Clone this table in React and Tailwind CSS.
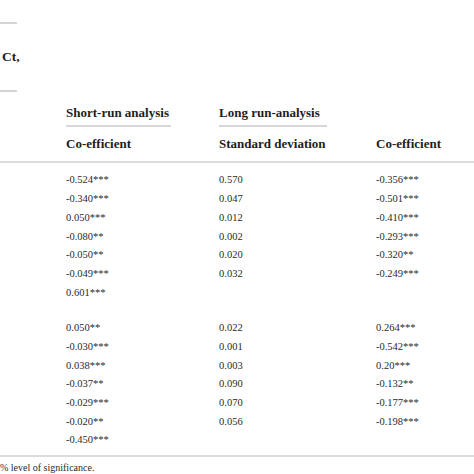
import React from "react";

const shortRun = [
  ["-0.524***", "0.570", "-0.356***"],
  ["-0.340***", "0.047", "-0.501***"],
  ["0.050***", "0.012", "-0.410***"],
  ["-0.080**", "0.002", "-0.293***"],
  ["-0.050**", "0.020", "-0.320**"],
  ["-0.049***", "0.032", "-0.249***"],
  ["0.601***", "", ""],
];

const longRun = [
  ["0.050**", "0.022", "0.264***"],
  ["-0.030***", "0.001", "-0.542***"],
  ["0.038***", "0.003", "0.20***"],
  ["-0.037**", "0.090", "-0.132**"],
  ["-0.029***", "0.070", "-0.177***"],
  ["-0.020**", "0.056", "-0.198***"],
  ["-0.450***", "", ""],
];

function Rows({ rows }) {
  return (
    <div className="flex flex-col">
      {rows.map((r, i) => (
        <div key={i} className="grid grid-cols-[66px_153px_157px_1fr] h-[18.7px] items-center">
          <div></div>
          <div>{r[0]}</div>
          <div>{r[1]}</div>
          <div>{r[2]}</div>
        </div>
      ))}
    </div>
  );
}

export default function App() {
  return (
    <div
      className="w-[474px] h-[474px] overflow-hidden bg-white text-[#1e1e1e]"
      style={{ fontFamily: '"Liberation Serif", "Times New Roman", serif' }}
    >
      <div className="pt-[22px]">
        <div className="w-[17px] h-[2px] bg-[#d4d4d4]"></div>
        <div className="h-[66px] flex items-center font-bold text-[13.5px] pl-[2px]">
          <span>Ct,</span>
        </div>
        <div className="w-[17px] h-[2px] bg-[#d4d4d4]"></div>
      </div>

      <div className="grid grid-cols-[66px_153px_157px_1fr] font-bold text-[13px] whitespace-nowrap mt-[8px]">
        <div></div>
        <div className="w-[105px] h-[27px] flex items-center border-b-2 border-[#d8d8d8]">Short-run analysis</div>
        <div className="w-[108px] h-[27px] flex items-center border-b-2 border-[#d8d8d8]">Long run-analysis</div>
        <div></div>
        <div></div>
        <div className="h-[34px] flex items-center">Co-efficient</div>
        <div className="h-[34px] flex items-center">Standard deviation</div>
        <div className="h-[34px] flex items-center">Co-efficient</div>
      </div>
      <div className="h-[2px] bg-[#dcdcdc]"></div>

      <div className="text-[10.5px] text-[#2a2a2a] pt-[8px]">
        <Rows rows={shortRun} />
        <div className="h-[17px]"></div>
        <Rows rows={longRun} />
      </div>

      <div className="h-[2px] bg-[#dcdcdc] mt-[5px]"></div>
      <div className="text-[10px] text-[#2a2a2a] mt-[3px]">% level of significance.</div>
    </div>
  );
}
